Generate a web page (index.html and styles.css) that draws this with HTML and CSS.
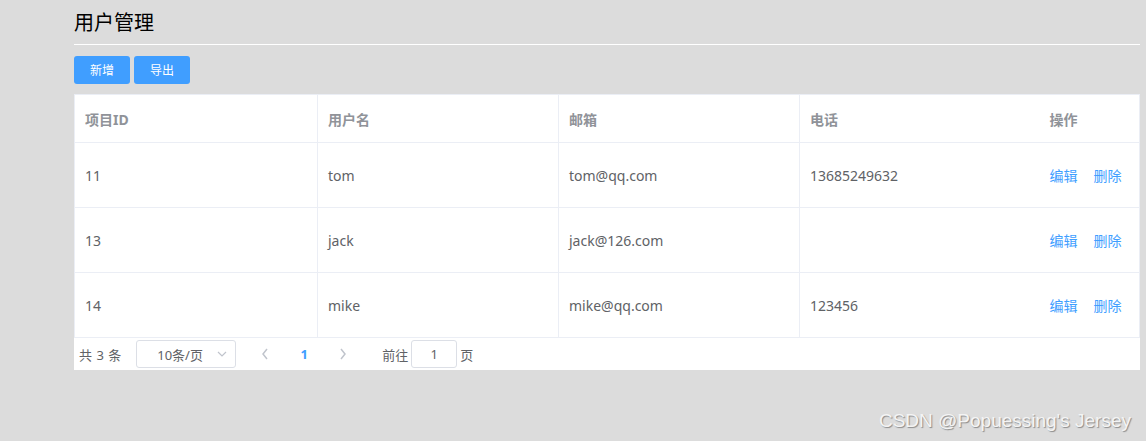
FILE: index.html
```html
<!DOCTYPE html>
<html>
<head>
    <title>用户管理</title>
    <link rel="stylesheet" href="styles.css">
</head>
<body>
    <div class="page">
        <h2 class="page-title">用户管理</h2>

        <div class="toolbar">
            <button class="btn">新增</button>
            <button class="btn">导出</button>
        </div>

        <div class="table-box">
            <table class="data-table">
                <colgroup>
                    <col class="col-id">
                    <col class="col-name">
                    <col class="col-mail">
                    <col class="col-phone">
                    <col class="col-ops">
                </colgroup>
                <thead>
                    <tr>
                        <th>项目ID</th>
                        <th>用户名</th>
                        <th>邮箱</th>
                        <th class="no-line">电话</th>
                        <th>操作</th>
                    </tr>
                </thead>
                <tbody>
                    <tr>
                        <td>11</td>
                        <td>tom</td>
                        <td>tom@qq.com</td>
                        <td class="no-line">13685249632</td>
                        <td class="ops"><a>编辑</a><a>删除</a></td>
                    </tr>
                    <tr>
                        <td>13</td>
                        <td>jack</td>
                        <td>jack@126.com</td>
                        <td class="no-line"></td>
                        <td class="ops"><a>编辑</a><a>删除</a></td>
                    </tr>
                    <tr>
                        <td>14</td>
                        <td>mike</td>
                        <td>mike@qq.com</td>
                        <td class="no-line">123456</td>
                        <td class="ops"><a>编辑</a><a>删除</a></td>
                    </tr>
                </tbody>
            </table>

            <div class="pager">
                <span class="total">共 3 条</span>
                <div class="select">
                    <span>10条/页</span>
                    <svg class="caret" width="10" height="6" viewBox="0 0 10 6"><polyline points="1,1 5,5 9,1" fill="none" stroke="#c0c4cc" stroke-width="1.2"/></svg>
                </div>
                <span class="pg-btn pg-prev">
                    <svg width="8" height="12" viewBox="0 0 8 12"><polyline points="6,1 2,6 6,11" fill="none" stroke="#c0c4cc" stroke-width="1.5"/></svg>
                </span>
                <span class="pg-num">1</span>
                <span class="pg-btn">
                    <svg width="8" height="12" viewBox="0 0 8 12"><polyline points="2,1 6,6 2,11" fill="none" stroke="#c0c4cc" stroke-width="1.5"/></svg>
                </span>
                <span class="jump">前往<span class="jump-input">1</span>页</span>
            </div>
        </div>
    </div>

    <div class="watermark">CSDN @Popuessing's Jersey</div>
</body>
</html>
```

FILE: styles.css
```css
body {
    margin: 0;
    background-color: #dcdcdc;
    font-family: "Noto Sans", "Noto Sans CJK SC", sans-serif;
    color: #606266;
}

.page {
    padding: 0 6px 0 74px;
}

.page-title {
    margin: 0;
    height: 44px;
    line-height: 46px;
    font-size: 20px;
    font-weight: normal;
    color: #000;
    border-bottom: 1px solid #ffffff;
}

.toolbar {
    display: flex;
    gap: 4px;
    margin-top: 11px;
}

.btn {
    width: 56px;
    height: 28px;
    padding: 0;
    border: none;
    border-radius: 3px;
    background-color: #409eff;
    color: #fff;
    font-family: inherit;
    font-size: 12px;
}

.table-box {
    margin-top: 10px;
    background-color: #fff;
}

.data-table {
    width: 100%;
    table-layout: fixed;
    border-collapse: collapse;
    border: 1px solid #ebeef5;
    font-size: 14px;
}

.col-id { width: 243px; }
.col-name { width: 241px; }
.col-mail { width: 241px; }
.col-phone { width: 240px; }
.col-ops { width: 100px; }

.data-table th,
.data-table td {
    text-align: left;
    padding: 0 10px;
    border-right: 1px solid #ebeef5;
    border-bottom: 1px solid #ebeef5;
}

.data-table th {
    height: 47px;
    color: #909399;
    font-weight: bold;
}

.data-table td {
    height: 64px;
}

.data-table .no-line {
    border-right: none;
}

.ops {
    padding-left: 11px;
}

.ops a {
    color: #409eff;
    margin-right: 16px;
}

.ops a:last-child {
    margin-right: 0;
}

.pager {
    display: flex;
    align-items: center;
    height: 32px;
    padding-left: 5px;
    font-size: 13px;
}

.total {
    margin-right: 15px;
    word-spacing: 1px;
}

.select {
    display: flex;
    align-items: center;
    justify-content: space-between;
    box-sizing: border-box;
    width: 100px;
    height: 28px;
    padding: 0 8px 0 20px;
    border: 1px solid #dcdfe6;
    border-radius: 3px;
}

.pg-btn {
    display: flex;
    align-items: center;
    justify-content: center;
    width: 36px;
    height: 28px;
}

.pg-prev {
    margin-left: 11px;
}

.pg-num {
    width: 42px;
    text-align: center;
    color: #409eff;
    font-weight: bold;
}

.jump {
    display: flex;
    align-items: center;
    gap: 3px;
    margin-left: 21px;
}

.jump-input {
    box-sizing: border-box;
    width: 46px;
    height: 28px;
    line-height: 26px;
    text-align: center;
    border: 1px solid #dcdfe6;
    border-radius: 3px;
}

.watermark {
    position: absolute;
    right: 15px;
    bottom: 9px;
    font-family: "Liberation Sans", sans-serif;
    font-size: 19px;
    color: #f4f4f4;
    text-shadow: 1px 1px 1px #8a8a8a;
}
```
